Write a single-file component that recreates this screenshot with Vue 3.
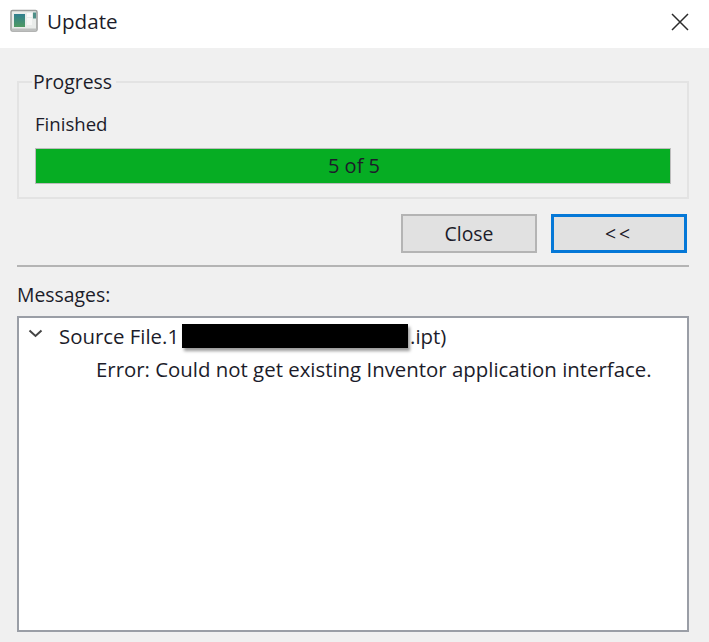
<template>
  <div class="dlg">
    <header class="dlg__title">
      <svg class="dlg__icon" width="29" height="26" viewBox="0 0 29 26" aria-hidden="true">
        <defs>
          <linearGradient id="appFill" x1="0" y1="0" x2="0" y2="1">
            <stop offset="0" stop-color="#2f7f8f" />
            <stop offset="1" stop-color="#4f9a62" />
          </linearGradient>
        </defs>
        <rect x="1" y="1.5" width="26" height="20.5" rx="1.5" fill="#e9ecea" stroke="#9a9c9b" stroke-width="1.5" />
        <rect x="1.5" y="19.5" width="25" height="2.5" fill="#bdbfbe" />
        <rect x="4" y="5" width="11" height="13" fill="url(#appFill)" />
        <rect x="17" y="4" width="5" height="4" fill="#fafafa" />
        <rect x="17" y="9" width="5" height="7" fill="#f6f7f6" />
        <rect x="23" y="3.5" width="3" height="6" fill="#4f8f88" />
      </svg>
      <span class="dlg__name">Update</span>
      <svg class="dlg__close" width="18" height="18" viewBox="0 0 18 18" aria-hidden="true">
        <path d="M1 1 L17 17 M17 1 L1 17" stroke="#2a2a2a" stroke-width="1.5" fill="none" />
      </svg>
    </header>

    <main class="dlg__body">
      <fieldset class="group">
        <legend class="group__legend">Progress</legend>
        <div class="group__status">Finished</div>
        <div class="bar">5 of 5</div>
      </fieldset>

      <div class="actions">
        <button type="button" class="btn">Close</button>
        <button type="button" class="btn btn--focus">&lt;&lt;</button>
      </div>

      <hr class="sep" />

      <div class="msgLabel">Messages:</div>
      <div class="msgs">
        <div class="msgs__row">
          <svg class="msgs__chev" width="15" height="9" viewBox="0 0 15 9" aria-hidden="true">
            <path d="M1.5 1.5 L7.5 7 L13.5 1.5" stroke="#444" stroke-width="2" fill="none" />
          </svg>
          <span>Source File.1</span>
          <span class="msgs__redact"></span>
          <span>.ipt)</span>
        </div>
        <div class="msgs__err">Error: Could not get existing Inventor application interface.</div>
      </div>
    </main>
  </div>
</template>

<script setup>
</script>

<style>
html,
body {
  margin: 0;
  background: #f0f0f0;
}
</style>

<style scoped>
.dlg {
  width: 709px;
  height: 642px;
  display: flex;
  flex-direction: column;
  overflow: hidden;
  background: #f0f0f0;
  color: #1c1c2a;
  font-family: "Open Sans", "Noto Sans", sans-serif;
  font-size: 19.4px;
}

.dlg__title {
  height: 48px;
  flex: none;
  display: flex;
  align-items: center;
  padding: 0 20px 5px 10px;
  box-sizing: border-box;
  background: #fff;
}

.dlg__icon {
  margin-right: 8px;
}

.dlg__name {
  flex: 1;
  font-size: 20.6px;
  margin-top: -2px;
}

.dlg__body {
  flex: 1;
  display: flex;
  flex-direction: column;
  padding: 22px 20px 10px 17px;
  min-height: 0;
}

.group {
  margin: 0;
  padding: 20px 16px 13px 16px;
  height: 129px;
  box-sizing: border-box;
  border: 2px solid #e3e3e3;
  min-width: 0;
}

.group__legend {
  padding: 0 4px 0 1px;
  margin-left: -3px;
  line-height: 24px;
}

.group__status {
  line-height: 24px;
  margin-top: -2px;
  font-size: 18.6px;
}

.bar {
  margin-top: 12px;
  padding-left: 2px;
  height: 36px;
  line-height: 33px;
  box-sizing: border-box;
  border: 1px solid #bcbcbc;
  background: #06ad23;
  text-align: center;
  font-size: 20px;
}

.actions {
  display: flex;
  justify-content: flex-end;
  gap: 14px;
  margin-top: 15px;
  padding-right: 2px;
}

.btn {
  width: 136px;
  height: 39px;
  box-sizing: border-box;
  border: 2px solid #b4b4b4;
  background: #e1e1e1;
  color: inherit;
  font: inherit;
  padding: 0;
}

.btn--focus {
  border: 3px solid #0578d7;
  letter-spacing: 3px;
}

.sep {
  margin: 12px 0 0;
  height: 2px;
  border: 0;
  background: #b4b4b4;
}

.msgLabel {
  margin-top: 16px;
  line-height: 24px;
}

.msgs {
  margin-top: 9px;
  flex: 1;
  min-height: 0;
  box-sizing: border-box;
  border: 2px solid #9a9ea6;
  background: #fff;
  padding: 4px 0 0 9px;
  font-size: 20.4px;
}

.msgs__row {
  display: flex;
  align-items: center;
  height: 28px;
}

.msgs__chev {
  margin-right: 16px;
  margin-top: -5px;
}

.msgs__redact {
  width: 226px;
  height: 24px;
  margin: 0 2px 0 3px;
  background: #000;
  box-shadow: 2px 3px 3px rgba(0, 0, 0, 0.4);
}

.msgs__err {
  margin: 5px 0 0 68px;
  line-height: 28px;
  white-space: nowrap;
}
</style>
